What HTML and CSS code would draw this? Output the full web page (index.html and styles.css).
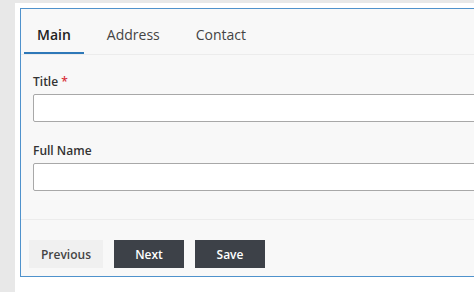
FILE: index.html
```html
<!DOCTYPE html>
<html lang="en">
<head>
    <meta charset="UTF-8">
    <meta name="viewport" content="width=device-width, initial-scale=1.0">
    <title>Wizard Form</title>
    <link rel="stylesheet" href="styles.css">
</head>
<body>
    <div class="page">
        <div class="panel">
            <div class="tabs">
                <div class="tab active">Main</div>
                <div class="tab">Address</div>
                <div class="tab">Contact</div>
            </div>
            <div class="tab-body">
                <div class="field">
                    <label for="title">Title <span class="req">*</span></label>
                    <input type="text" id="title">
                </div>
                <div class="field">
                    <label for="fullName">Full Name</label>
                    <input type="text" id="fullName">
                </div>
            </div>
            <div class="footer">
                <button class="btn btn-light">Previous</button>
                <button class="btn btn-dark">Next</button>
                <button class="btn btn-dark">Save</button>
            </div>
        </div>
    </div>
</body>
</html>
```

FILE: styles.css
```css
html, body {
    height: 100%;
}
body {
    margin: 0;
    background-color: #e8e8e8;
    font-family: "Open Sans", Arial, sans-serif;
    color: #333;
    overflow: hidden;
}
.page {
    margin: 3px 0 0 15px;
    padding: 5px 0 0 5px;
    background: #fff;
    height: 100%;
}
.panel {
    width: 520px;
    border: 1px solid #4f92cc;
    background: #f8f8f8;
}
.tabs {
    display: flex;
    padding: 0 3px;
    border-bottom: 1px solid #ececec;
}
.tab {
    height: 34px;
    line-height: 34px;
    padding: 9px 13px 0;
    margin-right: 10px;
    font-size: 14px;
    color: #444;
    border-bottom: 2px solid transparent;
}
.tab.active {
    font-weight: 600;
    color: #222;
    border-bottom-color: #2e78b8;
}
.tab-body {
    padding: 20px 12px 28px;
    border-bottom: 1px solid #ececec;
}
.field + .field {
    margin-top: 22px;
}
.field label {
    display: block;
    font-size: 12px;
    line-height: 14px;
    font-weight: 600;
    margin-bottom: 5px;
}
.req {
    color: #d9303a;
}
.field input {
    display: block;
    box-sizing: border-box;
    width: 100%;
    height: 28px;
    border: 1px solid #a8a8a8;
    border-radius: 2px;
    background: #fff;
}
.footer {
    display: flex;
    gap: 11px;
    padding: 20px 8px 8px;
}
.btn {
    width: 70px;
    height: 28px;
    border: none;
    font-family: "Open Sans", Arial, sans-serif;
    font-size: 12px;
    font-weight: 600;
    cursor: pointer;
}
.btn-light {
    width: 74px;
    background-color: #f0f0f0;
    color: #444;
}
.btn-dark {
    background-color: #3d4148;
    color: #fff;
}
```
